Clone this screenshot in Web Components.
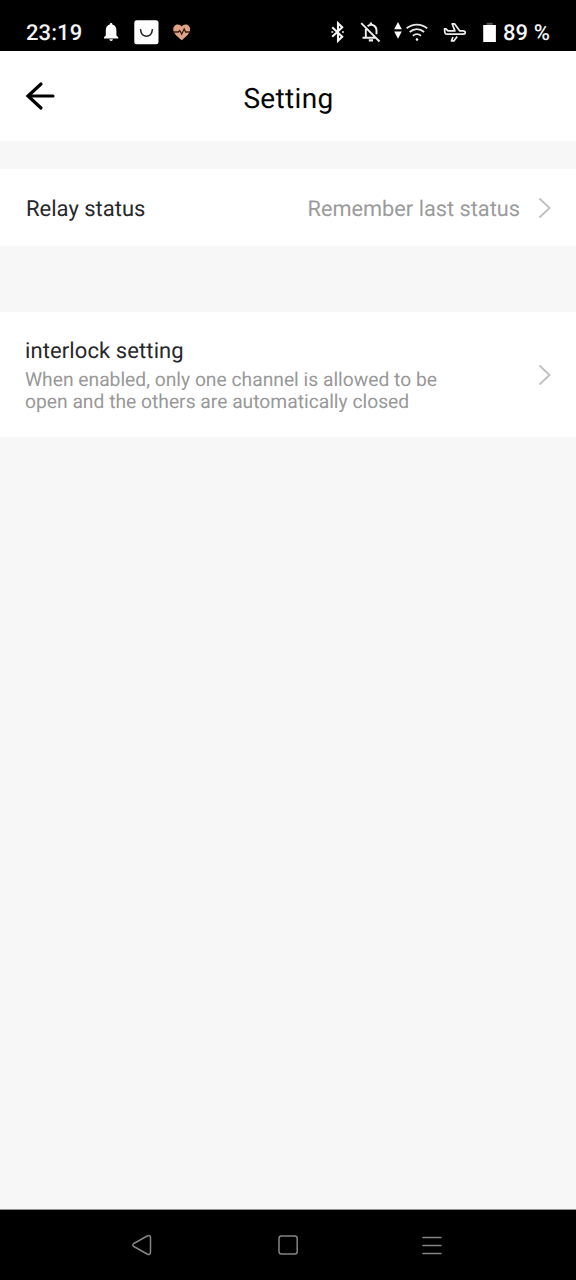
<!DOCTYPE html>
<html lang="en">
<head>
<meta charset="utf-8">
<title>Setting</title>
<style>
html,body{margin:0;height:100%}
body{font-family:Roboto,"Liberation Sans",sans-serif;background:#f7f7f7;text-rendering:geometricPrecision}
</style>
</head>
<body>
<setting-screen></setting-screen>
<script>
const define = (name, html) => customElements.define(name, class extends HTMLElement {
  constructor() {
    super();
    const t = document.createElement('template');
    t.innerHTML = html;
    this.attachShadow({ mode: 'open' }).append(t.content.cloneNode(true));
  }
});

define('status-bar', `
<style>
:host{display:flex;box-sizing:border-box;height:51px;background:#000;color:#f4f4f4;padding:18px 26px 0 26px;justify-content:space-between;flex:none}
.side{display:flex;height:28px;align-items:center}
svg{display:block;height:28px;flex:none}
span{font-size:22px;font-weight:500;line-height:32px;height:28px;white-space:nowrap}
.time{width:76px;letter-spacing:.1px}
.pct{width:47px;margin-left:6px;letter-spacing:.1px}
</style>
<div class="side">
  <span class="time">23:19</span>
  <svg width="20" viewBox="102 18 20 28"><path d="M104 38.5v-1.200l1.800-1.800v-5.200c0-3 1.400-5 4-5.700v-.4a1.300 1.300 0 0 1 2.600 0v.4c2.600.7 4 2.700 4 5.700v5.200l1.800 1.800v1.200zM109.300 39.300h3.600a1.800 1.800 0 0 1-3.600 0z" fill="#fff"/></svg>
  <svg width="48" viewBox="122 18 48 28"><rect x="134.300" y="20.200" width="24.200" height="24" rx="2.500" fill="#fff"/><path d="M140.600 29.800c.5 8.500 11.200 8.500 11.700 0" fill="none" stroke="#222" stroke-width="1.600" stroke-linecap="round"/></svg>
  <svg width="24" viewBox="170 18 24 28"><path d="M181.700 40.200c-5-4.100-8.400-7-8.400-10.900 0-5.300 6-6.500 8.400-2.700 2.400-3.800 8.400-2.600 8.400 2.700 0 3.900-3.400 6.800-8.400 10.900z" fill="#dfa487"/><path d="M173 32h5.200l1.500-1.500 2 3.500 2.500-5 1.400 3h4.800" fill="none" stroke="#3a1d12" stroke-width="1.300"/></svg>
</div>
<div class="side">
  <svg width="20" viewBox="328 18 20 28"><path d="M332.200 27.300l10 9.500-4.200 4V23.200l4.200 4-10 9.500" fill="none" stroke="#f4f4f4" stroke-width="2.100"/><path d="M331.300 31h2v2h-2zM342 31h2v2h-2z" fill="#aaa"/></svg>
  <svg width="42" viewBox="348 18 42 28"><g fill="none" stroke="#eee" stroke-width="1.900"><path d="M361.200 23.200l18.300 18.300M365.800 29v8.700M362.500 37.700h12.700M367.600 26.300c4-3.500 8.900-.5 8.900 4v4"/><path d="M370.900 22.500v2.500M368.800 40.300h4.200" stroke-width="2.300"/></g></svg>
  <svg width="14" viewBox="390 18 14 28"><path d="M398 22l3.800 7.200h-7.600zM394.200 31.500h7.600l-3.800 7.200z" fill="#fff"/></svg>
  <svg width="28" viewBox="404 18 28 28"><g fill="none" stroke="#e8e8e8" stroke-width="1.800"><path d="M406.600 28.300c6-5 14.600-5 20.600 0M409.700 32c4.400-3.700 10-3.700 14.400 0M412.800 35.700c2.500-2 5.700-2 8.200 0"/></g><circle cx="417" cy="39.500" r="1.300" fill="#fff"/></svg>
  <svg width="40" viewBox="432 18 40 28"><path d="M444.500 28.800h1.500l2 2.100h6.900l-2.700-7h2.500l5.100 7h3.200c3 0 3 3.300 0 3.300h-16c-1.400 0-2-.7-2.100-1.600zM453 37l-1.500 3.900h2.300l3.400-4.500" fill="none" stroke="#eee" stroke-width="1.700" stroke-linejoin="round"/></svg>
  <svg width="25" viewBox="472 18 25 28"><path d="M486.700 22.800h6v2h-6z" fill="#555"/><path d="M483.200 25h12.700v17h-12.700z" fill="#fff"/></svg>
  <span class="pct">89 %</span>
</div>`);

define('title-bar', `
<style>
:host{display:grid;grid-template-columns:80px 1fr 80px;align-items:center;height:90px;background:#fff;color:#050505;flex:none}
svg{display:block;margin:0 0 0 24px}
h1{margin:0;padding:5px 0 0 1px;text-align:center;font-size:28px;font-weight:400;line-height:34px;letter-spacing:.35px}
</style>
<svg width="34" height="34" viewBox="24 79 34 34"><path d="M53 96H28M41 84L28 96l13 12" fill="none" stroke="#000" stroke-width="3.200" stroke-linecap="round"/></svg>
<h1><slot></slot></h1>`);

define('chevron-icon', `
<style>:host{display:block;flex:none}svg{display:block}</style>
<svg width="14" height="24" viewBox="0 0 14 24"><path d="M1.500 2.500L11.500 12l-10 9.500" fill="none" stroke="#bfbfbf" stroke-width="1.800"/></svg>`);

define('setting-row', `
<style>
:host{display:flex;box-sizing:border-box;align-items:center;background:#fff;padding:0 24px 0 25px;flex:none}
.text{flex:1;padding-top:var(--text-drop,2px)}
.label{font-size:22px;line-height:28px;letter-spacing:var(--label-spacing,0);color:#27272b}
::slotted([slot=note]){display:block;width:430px;margin-top:3px;font-size:19.250px;line-height:22px;color:#989898}
::slotted([slot=value]){font-size:21.750px;line-height:28px;color:#9b9b9b;margin-right:18px;padding-top:3px}
</style>
<div class="text"><div class="label"><slot></slot></div><slot name="note"></slot></div>
<slot name="value"></slot>
<chevron-icon></chevron-icon>`);

define('nav-bar', `
<style>
:host{display:grid;grid-template-columns:repeat(3,144px);justify-content:center;justify-items:center;align-items:center;height:71px;box-sizing:border-box;border-top:1px solid #909090;background:#000;flex:none}
svg{display:block}
</style>
<svg width="24" height="24" viewBox="132 1233 24 24"><path d="M133.800 1243.500l13.400-7.500c1.900-1 3.300-.2 3.300 1.500v15c0 1.700-1.400 2.500-3.300 1.500l-13.400-7.500c-1.300-.9-1.300-2.100 0-3z" fill="none" stroke="#858585" stroke-width="1.500"/></svg>
<svg width="24" height="24" viewBox="276 1233 24 24"><rect x="279" y="1235.900" width="18.200" height="18.200" rx="2.500" fill="none" stroke="#858585" stroke-width="1.500"/></svg>
<svg width="24" height="24" viewBox="420 1233 24 24"><path d="M422.300 1237.500h19.400M422.300 1245.500h19.400M422.300 1253.500h19.400" stroke="#858585" stroke-width="1.300"/></svg>`);

define('setting-screen', `
<style>
:host{display:flex;flex-direction:column;height:1280px;background:#f7f7f7}
.relay{height:77px;margin-top:28px;padding-left:26px;padding-top:1px;--text-drop:3px}
.interlock{height:125px;margin-top:66px;--label-spacing:.1px}
nav-bar{margin-top:auto}
</style>
<status-bar></status-bar>
<title-bar>Setting</title-bar>
<setting-row class="relay">Relay status<span slot="value">Remember last status</span></setting-row>
<setting-row class="interlock">interlock setting<span slot="note">When enabled, only one channel is allowed to be<br>open and the others are automatically closed</span></setting-row>
<nav-bar></nav-bar>`);
</script>
</body>
</html>
